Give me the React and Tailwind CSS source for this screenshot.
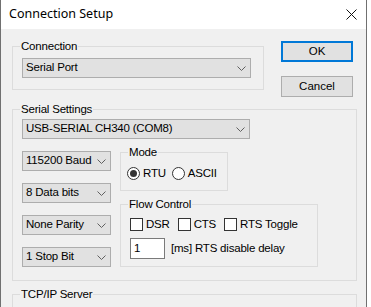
import React from 'react';

const ui = { fontFamily: '"Liberation Sans", Arial, sans-serif' };

const Chevron = () => (
  <svg width="9" height="5" viewBox="0 0 9 5" className="shrink-0">
    <path d="M0.5 0.5 L4.5 4.5 L8.5 0.5" fill="none" stroke="#606060" strokeWidth="1" />
  </svg>
);

const Select = ({ value, className = '' }) => (
  <div className={`h-[20px] bg-[#e1e1e1] border border-[#adadad] flex items-center justify-between pl-[3px] pr-[4px] ${className}`}>
    <span className="text-[11.5px] tracking-[-0.2px] leading-none text-black whitespace-nowrap">{value}</span>
    <Chevron />
  </div>
);

const Group = ({ title, className = '', pad = '', children }) => (
  <fieldset className={`border border-[#dcdcdc] min-w-0 p-0 m-0 ${className}`}>
    <legend className="ml-[7px] px-[1px] text-[11.5px] tracking-[-0.2px] leading-[14px] text-black">{title}</legend>
    <div className={pad}>{children}</div>
  </fieldset>
);

const Radio = ({ checked, label }) => (
  <label className="flex items-center gap-[3px]">
    <span className="w-[13px] h-[13px] rounded-full border border-[#333] bg-white flex items-center justify-center">
      {checked && <span className="w-[7px] h-[7px] rounded-full bg-[#333]"></span>}
    </span>
    <span className="text-[11.5px] tracking-[-0.2px] leading-none">{label}</span>
  </label>
);

const Check = ({ label }) => (
  <label className="flex items-center gap-[3px]">
    <span className="w-[13px] h-[13px] border border-[#333] bg-white"></span>
    <span className="text-[11.5px] tracking-[-0.2px] leading-none whitespace-nowrap">{label}</span>
  </label>
);

const Button = ({ children, primary }) => (
  <button
    className={`w-[72px] h-[21px] bg-[#e1e1e1] text-[11.5px] leading-none text-black flex items-center justify-center ${
      primary ? 'border-2 border-[#0078d7]' : 'border border-[#adadad]'
    }`}
  >
    {children}
  </button>
);

export default function App() {
  return (
    <div className="w-[371px] h-[307px] bg-white overflow-hidden" style={ui}>
      <div className="w-[367px] h-full border-x border-[#707070] flex flex-col">
        <div className="h-[29px] bg-white flex items-center justify-between pl-[8px] pr-[9px] shrink-0">
          <span className="text-[12.5px] text-black" style={{ fontFamily: '"Noto Sans", sans-serif' }}>
            Connection Setup
          </span>
          <svg width="11" height="11" viewBox="0 0 11 11">
            <path d="M0.5 0.5 L10.5 10.5 M10.5 0.5 L0.5 10.5" stroke="#111" strokeWidth="1" />
          </svg>
        </div>

        <div className="flex-1 bg-[#f0f0f0] pl-[11px] pt-[10px] overflow-hidden">
          <div className="flex items-start gap-[17px]">
            <Group title="Connection" className="w-[252px]" pad="pl-[9px] pr-[12px] pt-[5px] pb-[11px]">
              <Select value="Serial Port" />
            </Group>
            <div className="flex flex-col gap-[14px] mt-[2px]">
              <Button primary>OK</Button>
              <Button>Cancel</Button>
            </div>
          </div>

          <Group title="Serial Settings" className="w-[345px] mt-[5px]" pad="pl-[9px] pt-[3px] pb-[13px]">
            <Select value="USB-SERIAL CH340 (COM8)" className="w-[228px]" />
            <div className="flex gap-[9px] mt-[6px]">
              <div className="flex flex-col gap-[12px] pt-[6px] w-[89px]">
                <Select value="115200 Baud" />
                <Select value="8 Data bits" />
                <Select value="None Parity" />
                <Select value="1 Stop Bit" />
              </div>
              <div className="flex flex-col gap-[6px]">
                <Group title="Mode" className="w-[108px]" pad="pl-[6px] pt-[8px] pb-[10px]">
                  <div className="flex items-center gap-[6px]">
                    <Radio checked label="RTU" />
                    <Radio label="ASCII" />
                  </div>
                </Group>
                <Group title="Flow Control" className="w-[198px]" pad="pl-[9px] pt-[7px] pb-[7px]">
                  <div className="flex items-center gap-[8px]">
                    <Check label="DSR" />
                    <Check label="CTS" />
                    <Check label="RTS Toggle" />
                  </div>
                  <div className="flex items-center gap-[6px] mt-[7px]">
                    <div className="w-[35px] h-[21px] bg-white border border-[#7a7a7a] pl-[3px] flex items-center text-[11.5px] leading-none">
                      1
                    </div>
                    <span className="text-[11.5px] tracking-[-0.2px] leading-none">[ms] RTS disable delay</span>
                  </div>
                </Group>
              </div>
            </div>
          </Group>

          <Group title="TCP/IP Server" className="w-[345px] mt-[6px] h-[40px]">
            <div></div>
          </Group>
        </div>
      </div>
    </div>
  );
}
